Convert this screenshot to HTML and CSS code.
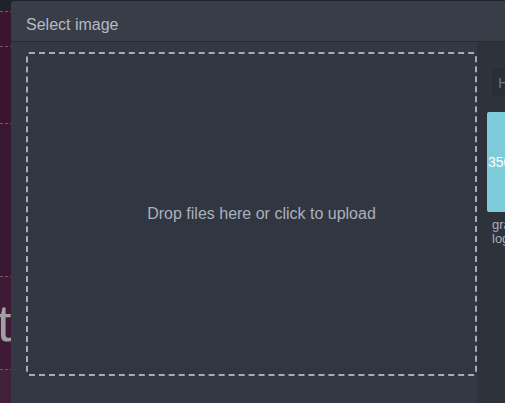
FILE: index.html
```html
<!DOCTYPE html>
<html>
<head>
<meta charset="utf-8">
<link rel="stylesheet" href="styles.css">
</head>
<body>
<div class="page">
  <div class="topbar"></div>
  <div class="row r1"></div>
  <div class="row r2"></div>
  <div class="row r3"></div>
  <div class="row r4"><span class="bigtext">tc</span></div>
  <div class="row r5"></div>
</div>
<div class="modal">
  <div class="modal-header">Select image</div>
  <div class="modal-body">
    <div class="upload-area">
      <div class="dropzone"><span class="drop-text">Drop files here or click to upload</span></div>
    </div>
    <div class="library">
      <div class="search">H</div>
      <div class="thumb">
        <div class="thumb-img">350</div>
        <div class="thumb-caption">
          <div class="thumb-name">gra</div>
          <div class="thumb-name">log</div>
        </div>
      </div>
    </div>
  </div>
</div>
</body>
</html>
```
FILE: styles.css
```css
html, body {
  margin: 0;
  padding: 0;
  width: 505px;
  height: 403px;
  overflow: hidden;
  background: #3a1730;
  font-family: "Liberation Sans", Arial, sans-serif;
}
.page {
  display: flex;
  flex-direction: column;
}
.topbar {
  height: 11px;
  background: #1f222a;
}
.row {
  border-top: 1px dashed #6e5a68;
}
.r1 { height: 34px; background: #3b1530; }
.r2 { height: 76px; background: #3b1530; }
.r3 { height: 152px; background: #391631; }
.r4 {
  height: 92px;
  background: #3f1a36;
  display: flex;
  align-items: center;
}
.r5 { height: 40px; background: #41203a; }
.bigtext {
  font-size: 52px;
  color: #a3a0a4;
  margin-left: -3px;
  line-height: 1;
}
.modal {
  position: absolute;
  left: 11px;
  top: 1px;
  width: 520px;
  height: 420px;
  background: #353a44;
  border-radius: 4px 0 0 0;
  display: flex;
  flex-direction: column;
}
.modal-header {
  height: 41px;
  box-sizing: border-box;
  padding: 15px 15px 0;
  font-size: 16px;
  color: #b5bac5;
  background: #383d48;
  border-bottom: 1px solid #262a31;
  border-radius: 4px 0 0 0;
}
.modal-body {
  display: flex;
  flex: 1;
}
.upload-area {
  width: 466px;
  box-sizing: border-box;
  padding: 10px 0 0 15px;
  background: #343842;
}
.dropzone {
  width: 451px;
  height: 324px;
  box-sizing: border-box;
  border: 2px dashed #a4acbb;
  border-radius: 3px;
  display: flex;
  align-items: center;
  justify-content: center;
  background: #323640;
}
.drop-text {
  font-size: 16px;
  color: #a9b0be;
  margin-left: 20px;
}
.library {
  flex: 1;
  background: #2e323b;
  padding: 25px 0 0 10px;
  display: flex;
  flex-direction: column;
}
.search {
  margin-left: 4px;
  height: 30px;
  box-sizing: border-box;
  background: #2a2e36;
  border: 1px solid #30343d;
  border-radius: 3px;
  color: #6f7480;
  font-size: 15px;
  padding: 6px 0 0 6px;
}
.thumb {
  margin-top: 15px;
}
.thumb-img {
  height: 100px;
  background: #7ecbd9;
  border-radius: 2px;
  color: #ffffff;
  font-size: 14px;
  display: flex;
  align-items: center;
  padding-left: 1px;
}
.thumb-caption {
  margin-top: 6px;
  padding-left: 5px;
}
.thumb-name {
  font-size: 13px;
  line-height: 14px;
  color: #a9afbb;
}
```
